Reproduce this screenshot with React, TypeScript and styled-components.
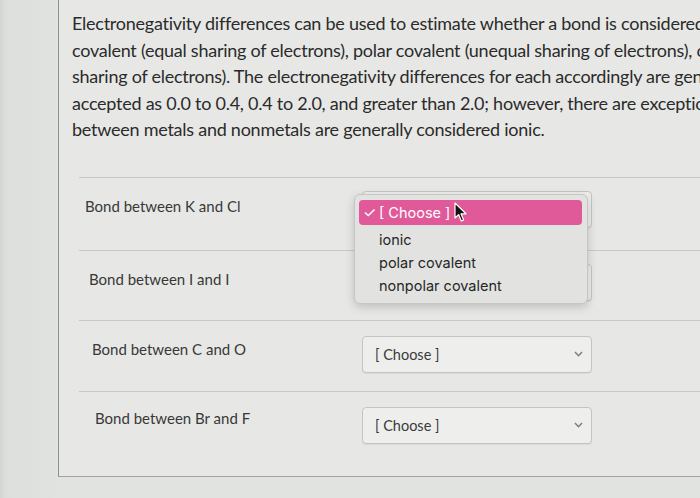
import React from "react";
import styled, { createGlobalStyle } from "styled-components";

const GlobalStyle = createGlobalStyle`
  html, body { margin: 0; padding: 0; }
  body {
    background: #dcdedc;
    font-family: Lato, "Open Sans", sans-serif;
    color: #2e2e2e;
  }
`;

const Page = styled.div`
  width: 700px;
  height: 498px;
  overflow: hidden;
  display: flex;
  background: linear-gradient(90deg, #d3d5d4 0px, #dddfdd 6px, #e1e3e1 58px);
`;

const Card = styled.div`
  margin-left: 58px;
  flex: 1;
  height: 476px;
  border-left: 1.5px solid #8f9190;
  border-bottom: 1.5px solid #a2a4a3;
  background: #e7e8e6;
  display: flex;
  flex-direction: column;
  min-width: 0;
`;

const Intro = styled.div`
  padding: 10px 0 0 13px;
  font-size: 18px;
  line-height: 26.5px;
  letter-spacing: -0.25px;
  color: #2b2b2b;
`;

const Line = styled.div`
  white-space: nowrap;
`;

const FormList = styled.div`
  position: relative;
  margin: 34px 0 0 20px;
`;

const Row = styled.div<{ $h: number; $indent: number; $labelTop: number; $selTop: number }>`
  height: ${(p) => p.$h}px;
  border-top: 1px solid #c9cac8;
  display: grid;
  grid-template-columns: ${(p) => 283 - p.$indent}px 230px;
  align-items: start;
  padding-left: ${(p) => p.$indent}px;
  & > :first-child { margin-top: ${(p) => p.$labelTop}px; }
  & > :last-child { margin-top: ${(p) => p.$selTop}px; }
`;

const Label = styled.div`
  font-size: 15px;
  color: #383838;
  line-height: 18px;
`;

const Select = styled.div`
  height: 37px;
  box-sizing: border-box;
  border: 1px solid #c4c5c3;
  border-radius: 4px;
  background: #eeefed;
  display: flex;
  align-items: center;
  justify-content: space-between;
  padding: 0 8px 0 12px;
  font-size: 14.5px;
  color: #3a3a3a;
  box-shadow: 0 1px 1px rgba(0,0,0,0.06);
`;

const Chevron = () => (
  <svg width="9" height="6" viewBox="0 0 9 6">
    <path d="M1 1 L4.5 4.8 L8 1" fill="none" stroke="#7a7c7a" strokeWidth="1.4" />
  </svg>
);

const Menu = styled.div`
  position: absolute;
  top: 17px;
  left: 275px;
  width: 234px;
  box-sizing: border-box;
  padding: 5px 5px 6px 4px;
  background: #e2e3e1;
  border: 1px solid #c6c7c5;
  border-radius: 6px;
  box-shadow: 0 3px 10px rgba(0,0,0,0.18);
  font-family: Inter, "Open Sans", sans-serif;
  font-size: 14.5px;
  color: #262626;
`;

const Item = styled.div<{ $active?: boolean }>`
  height: ${(p) => (p.$active ? 25 : 23)}px;
  display: flex;
  align-items: center;
  padding-left: 20px;
  position: relative;
  border-radius: 4px;
  margin-bottom: ${(p) => (p.$active ? 3 : 0)}px;
  background: ${(p) => (p.$active ? "#e05a9a" : "transparent")};
  color: ${(p) => (p.$active ? "#ffffff" : "#262626")};
`;

const Check = styled.span`
  position: absolute;
  left: 4px;
  font-size: 15px;
`;

const Cursor = styled.svg`
  position: absolute;
  left: 95px;
  top: 2px;
`;

const rows = [
  { label: "Bond between K and Cl", h: 72, indent: 6, labelTop: 19, selTop: 13 },
  { label: "Bond between I and I", h: 69, indent: 10, labelTop: 19, selTop: 13 },
  { label: "Bond between C and O", h: 70, indent: 13, labelTop: 19, selTop: 15 },
  { label: "Bond between Br and F", h: 86, indent: 16, labelTop: 17, selTop: 15 },
];

export default function App() {
  return (
    <>
      <GlobalStyle />
      <Page>
        <Card>
          <Intro>
            <Line>Electronegativity differences can be used to estimate whether a bond is considered nonpolar</Line>
            <Line>covalent (equal sharing of electrons), polar covalent (unequal sharing of electrons), or ionic (no</Line>
            <Line>sharing of electrons). The electronegativity differences for each accordingly are generally</Line>
            <Line>accepted as 0.0 to 0.4, 0.4 to 2.0, and greater than 2.0; however, there are exceptions. Bonds</Line>
            <Line>between metals and nonmetals are generally considered ionic.</Line>
          </Intro>
          <FormList>
            {rows.map((r) => (
              <Row key={r.label} $h={r.h} $indent={r.indent} $labelTop={r.labelTop} $selTop={r.selTop}>
                <Label>{r.label}</Label>
                <Select>
                  <span>[ Choose ]</span>
                  <Chevron />
                </Select>
              </Row>
            ))}
            <Menu>
              <Item $active>
                <Check>✓</Check>[ Choose ]
                <Cursor width="14" height="21" viewBox="0 0 14 21">
                  <path d="M1 1 L1 16 L4.6 12.6 L7.3 19 L9.6 18 L7 11.8 L12 11.8 Z" fill="#111" stroke="#fff" strokeWidth="1.2" strokeLinejoin="round" />
                </Cursor>
              </Item>
              <Item>ionic</Item>
              <Item>polar covalent</Item>
              <Item>nonpolar covalent</Item>
            </Menu>
          </FormList>
        </Card>
      </Page>
    </>
  );
}
